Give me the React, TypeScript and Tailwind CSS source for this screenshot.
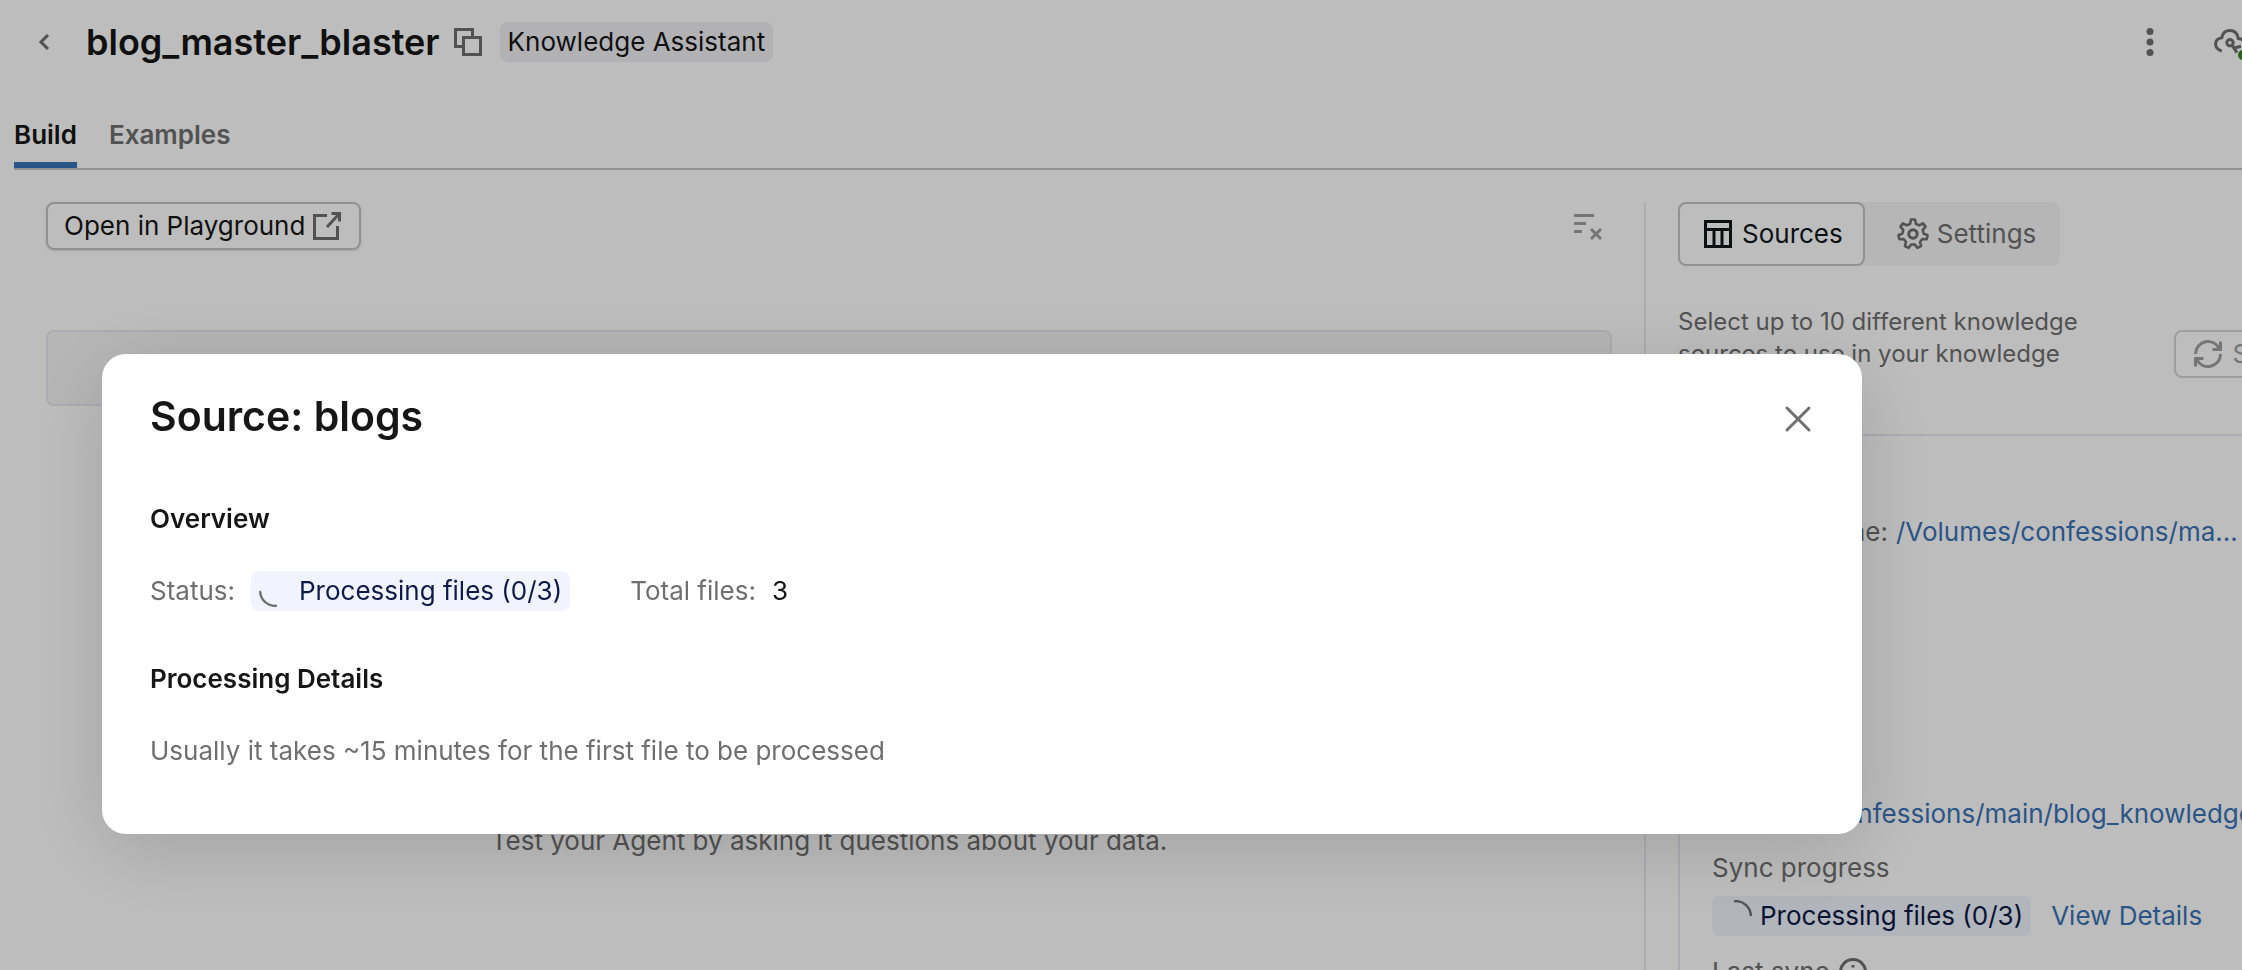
import React from "react";

interface IconProps {
  className?: string;
  children: React.ReactNode;
}

const Icon: React.FC<IconProps> = ({ className = "", children }) => (
  <svg
    viewBox="0 0 16 16"
    fill="none"
    stroke="currentColor"
    strokeWidth={1.5}
    aria-hidden="true"
    className={`size-8 shrink-0 ${className}`}
  >
    {children}
  </svg>
);

// Seven-toothed gear outline around (8, 8)
const gearPath = (() => {
  const points: string[] = [];
  for (let i = 0; i < 7; i++) {
    const mid = (i * 2 * Math.PI) / 7 - Math.PI / 2;
    const corners = [
      [-0.27, 5.3],
      [-0.14, 7.3],
      [0.14, 7.3],
      [0.27, 5.3],
    ];
    for (const [offset, radius] of corners) {
      const x = 8 + radius * Math.cos(mid + offset);
      const y = 8 + radius * Math.sin(mid + offset);
      points.push(`${x.toFixed(2)} ${y.toFixed(2)}`);
    }
  }
  return `M${points.join("L")}Z`;
})();

interface ProcessingTagProps {
  spinnerPath: string;
  children: React.ReactNode;
}

const ProcessingTag: React.FC<ProcessingTagProps> = ({
  spinnerPath,
  children,
}) => (
  <span className="flex items-center gap-2 h-10 px-2 rounded-lg bg-[#f1f4fe] text-[#0e1a47] whitespace-nowrap">
    <Icon className="text-[#6f6f6f]">
      <path d={spinnerPath} strokeWidth={1.2} strokeLinecap="round" />
    </Icon>
    {children}
  </span>
);

const PageHeader = () => (
  <header className="flex items-center h-[84px] pl-7 overflow-hidden">
    <button type="button" aria-label="Back" className="text-[#6f6f6f]">
      <Icon>
        <path d="M10 4.5 6.5 8 10 11.5" />
      </Icon>
    </button>
    <h1 className="ml-[26px] text-4xl font-semibold">blog_master_blaster</h1>
    <button type="button" aria-label="Copy name" className="ml-3 text-[#6f6f6f]">
      <Icon>
        <path d="M5.5 10.25H1.75v-8.5h8.5V5.5M5.75 5.75h8.5v8.5h-8.5z" />
      </Icon>
    </button>
    <span className="ml-4 flex items-center h-10 px-2 rounded-lg bg-[#f0f0f5]">
      Knowledge Assistant
    </span>
    <div className="ml-auto -mr-1 flex items-center gap-12 text-[#6f6f6f]">
      <button type="button" aria-label="More actions">
        <Icon>
          <g fill="currentColor" stroke="none">
            <circle cx="8" cy="2.75" r="1.75" />
            <circle cx="8" cy="8" r="1.75" />
            <circle cx="8" cy="13.25" r="1.75" />
          </g>
        </Icon>
      </button>
      <button type="button" aria-label="Connection" className="relative">
        <Icon>
          <path d="M3.9 12.5C2 11.9.8 10.7.8 9.1c0-1.7 1.2-2.9 3.1-3.2C4.3 3.7 5.9 2.3 8 2.3s3.7 1.4 4.1 3.9c1.9.1 3.2 1.1 3.6 2.9" />
          <circle cx="8" cy="8.4" r="1.6" />
          <path d="m9 9.6 2.5 3.7M10 11l3.5-.9" />
        </Icon>
        <span className="absolute left-6 top-6 size-2.5 rounded-full bg-[#3a8522]" />
      </button>
    </div>
  </header>
);

const Tabs = () => (
  <nav className="ml-3.5 mt-5 flex gap-8 border-b-2 border-[#c4c4c4] font-semibold">
    <button
      type="button"
      className="h-16 pt-1 border-b-[6px] border-[#3a73b6] text-[#161616]"
    >
      Build
    </button>
    <button type="button" className="h-16 pb-0.5 text-[#6f6f6f]">
      Examples
    </button>
  </nav>
);

const ChatPanel = () => (
  <section className="flex-1 min-w-0 pl-[46px] pr-8 flex flex-col">
    <div className="flex items-center justify-between">
      <button
        type="button"
        className="flex items-center gap-1.5 h-12 px-4 rounded-lg border-2 border-[#c4c4c4] shadow-sm"
      >
        Open in Playground
        <Icon className="text-[#6f6f6f]">
          <path d="M8 2.75H1.75v11.5h11.5V8M10.25 1.75h4v4M14 2 8 8.5" />
        </Icon>
      </button>
      <button type="button" aria-label="Clear chat" className="mr-2 text-[#a0a0a0]">
        <Icon>
          <path d="M1 2.75h10M1 6.75h6M1 10.75h4M9.5 9.5l5 5M14.5 9.5l-5 5" />
        </Icon>
      </button>
    </div>
    <div className="mt-20 h-[76px] shrink-0 rounded-lg border-2 border-[#e8e8f0] bg-[#f6f6f6]" />
    <p className="mt-[415px] text-center text-[#6f6f6f]">
      Test your Agent by asking it questions about your data.
    </p>
  </section>
);

const SourcesPanel = () => (
  <aside className="w-[598px] shrink-0 pl-8 border-l-2 border-[#e8e8f0] overflow-hidden text-[#6f6f6f]">
    <div className="flex w-fit rounded-lg bg-[#f6f6f6]">
      <button
        type="button"
        className="flex items-center gap-2 h-16 pl-[22px] pr-5 rounded-lg border-2 border-[#c4c4c4] bg-white text-[#11171c]"
      >
        <Icon>
          <path d="M1.75 1.75h12.5v12.5H1.75zM1.75 5.75h12.5M6 5.75v8.5M10 5.75v8.5" />
        </Icon>
        Sources
      </button>
      <button type="button" className="flex items-center gap-2 h-16 pl-8 pr-6">
        <Icon>
          <circle cx="8" cy="8" r="2.1" />
          <path d={gearPath} strokeWidth={1.3} strokeLinejoin="round" />
        </Icon>
        Settings
      </button>
    </div>

    <div className="mt-10 w-[634px] flex items-center justify-between">
      <p className="w-[420px] text-2xl leading-8">
        Select up to 10 different knowledge sources to use in your knowledge
        assistant.
      </p>
      <button
        type="button"
        disabled
        className="flex items-center gap-2 h-12 px-4 rounded-lg border-2 border-[#d6d6d6] text-[#a0a0a0]"
      >
        <Icon>
          <path d="M1.75 8A6.25 6.25 0 0 1 13.7 5.4M14.25 8A6.25 6.25 0 0 1 2.3 10.6M14.25 1.75v4h-4M1.75 14.25v-4h4" />
        </Icon>
        Sync
      </button>
    </div>

    <div className="mt-8 w-[640px] h-[640px] px-8 pt-19 rounded-lg border-2 border-[#e8e8f0] whitespace-nowrap">
      <p className="flex gap-2">
        <span className="w-44 text-right">Volume:</span>
        <a href="#volume" className="text-[#3a73b6]">
          /Volumes/confessions/ma...
        </a>
      </p>
      <a href="#path" className="mt-[242px] block text-[#3a73b6]">
        Volumes/confessions/main/blog_knowledge
      </a>
      <p className="mt-3.5">Sync progress</p>
      <div className="mt-2 flex items-center gap-5">
        <ProcessingTag spinnerPath="M7.5.6A7.4 7.4 0 0 1 15.4 7.5">
          Processing files (0/3)
        </ProcessingTag>
        <a href="#details" className="text-[#3a73b6]">
          View Details
        </a>
      </div>
      <p className="mt-4 flex items-center gap-2">
        Last sync
        <Icon>
          <circle cx="8" cy="8" r="6.25" />
          <path d="M8 7v4.5M8 4.5v1.25" />
        </Icon>
      </p>
    </div>
  </aside>
);

const SourceDialog = () => (
  <div className="fixed inset-0 bg-black/26 pt-[354px] pl-[102px] pr-[380px]">
    <div
      role="dialog"
      aria-modal="true"
      aria-labelledby="dialog-title"
      className="rounded-3xl bg-white px-12 pt-8 pb-[63px] shadow-[0_16px_80px_rgba(0,0,0,0.15)]"
    >
      <div className="flex justify-between h-[65px]">
        <h2 id="dialog-title" className="text-[41px] leading-[60px] font-semibold">
          Source: blogs
        </h2>
        <button type="button" aria-label="Close" className="text-[#6f6f6f]">
          <Icon>
            <path d="m2.5 2.5 11 11M13.5 2.5l-11 11" strokeLinecap="round" />
          </Icon>
        </button>
      </div>
      <h3 className="mt-12 font-semibold">Overview</h3>
      <div className="mt-8 flex items-center text-[#6f6f6f]">
        <span className="mr-4">Status:</span>
        <ProcessingTag spinnerPath="M.6 8.5A7.4 7.4 0 0 0 8.5 15.4">
          Processing files (0/3)
        </ProcessingTag>
        <span className="ml-15 mr-4">Total files:</span>
        <span className="text-[#161616]">3</span>
      </div>
      <h3 className="mt-12 font-semibold">Processing Details</h3>
      <p className="mt-8 text-[#6f6f6f]">
        Usually it takes ~15 minutes for the first file to be processed
      </p>
    </div>
  </div>
);

export default function App() {
  return (
    <div className="h-screen flex flex-col overflow-hidden bg-white font-['Inter','Liberation_Sans',sans-serif] text-[26px] leading-10 text-[#161616]">
      <PageHeader />
      <Tabs />
      <main className="flex flex-1 min-h-0 pt-8">
        <ChatPanel />
        <SourcesPanel />
      </main>
      <SourceDialog />
    </div>
  );
}
